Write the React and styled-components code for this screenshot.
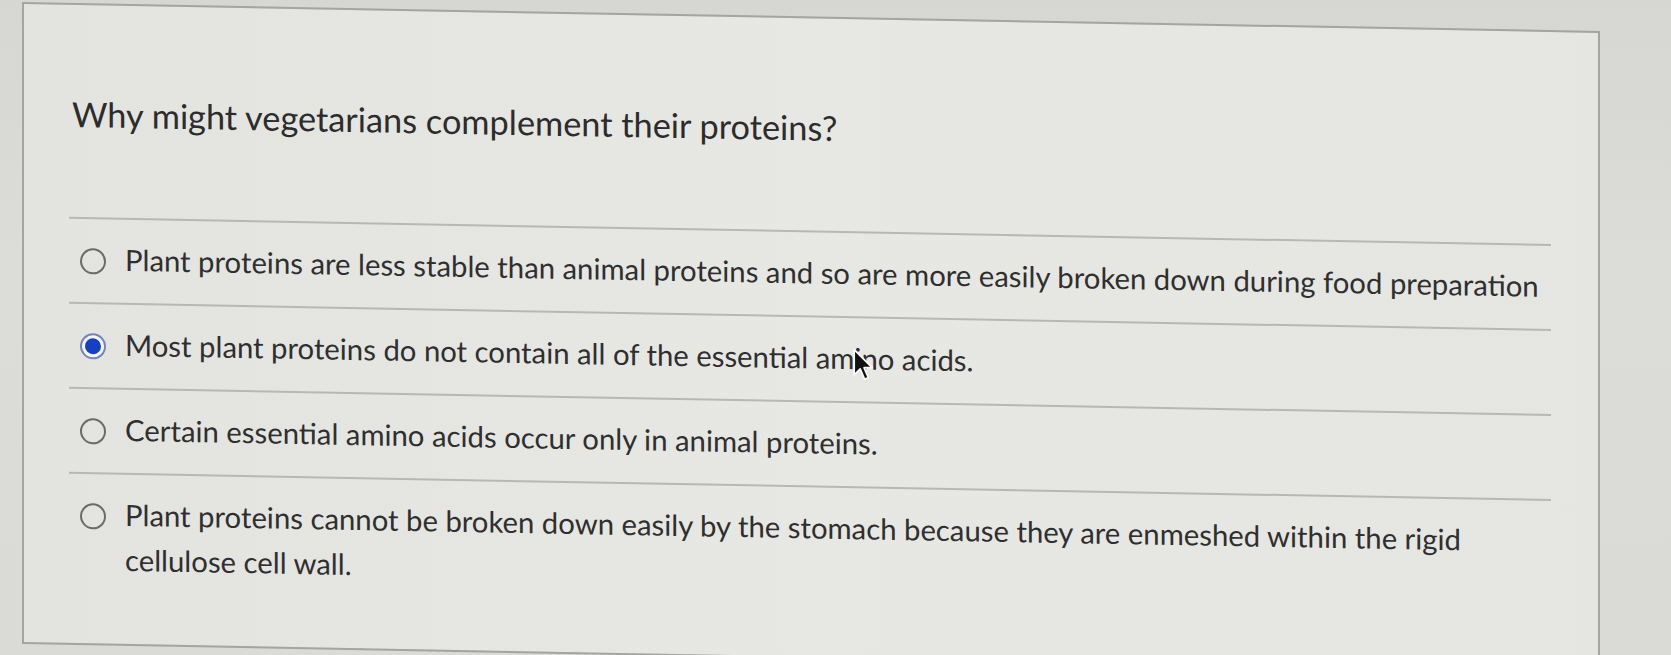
import React from "react";
import styled, { createGlobalStyle } from "styled-components";

const GlobalStyle = createGlobalStyle`
  html, body {
    margin: 0;
    padding: 0;
    background: #dcdcd9;
    overflow: hidden;
  }
  body {
    font-family: Lato, "Open Sans", sans-serif;
  }
`;

const Page = styled.div`
  position: relative;
  width: 1671px;
  height: 655px;
  padding: 2px 0 0 22px;
  box-sizing: border-box;
  overflow: hidden;
  background: linear-gradient(180deg, #d6d6d3 0%, #dcdcd9 40%, #dadad7 100%);
`;

const Card = styled.div`
  width: 1578px;
  height: 642px;
  box-sizing: border-box;
  border: 2px solid #a4a4a2;
  background: linear-gradient(90deg, #e3e3e0 0%, #e7e7e4 50%, #e5e5e2 100%);
  transform: skewY(1.05deg);
  transform-origin: 0 0;
  padding: 89px 0 0 45px;
`;

const Question = styled.h2`
  margin: 0 0 0 3px;
  font-family: Lato, sans-serif;
  font-weight: 400;
  font-size: 34.3px;
  line-height: 40px;
  color: #2c2c2c;
`;

const Options = styled.div`
  margin-top: 83px;
  width: 1482px;
  display: flex;
  flex-direction: column;
`;

const Option = styled.label`
  display: flex;
  align-items: flex-start;
  gap: 19px;
  border-top: 2px solid #b7b7b4;
  padding: 17px 0 ${(p) => (p.$last ? "0" : "21px")} 11px;
`;

const Radio = styled.span`
  flex: none;
  position: relative;
  width: 26px;
  height: 26px;
  margin-top: 12px;
  border-radius: 50%;
  box-sizing: border-box;
  border: 2px solid ${(p) => (p.$checked ? "#7484b8" : "#6b6b6b")};
  background: ${(p) => (p.$checked ? "#f4f5f8" : "transparent")};

  &::after {
    content: "";
    display: ${(p) => (p.$checked ? "block" : "none")};
    position: absolute;
    inset: 3px;
    border-radius: 50%;
    background: #1540c2;
  }
`;

const OptionText = styled.span`
  font-family: Lato, sans-serif;
  font-size: 29.3px;
  line-height: 45px;
  color: #2f2f2f;
`;

const Pointer = styled.svg`
  position: absolute;
  left: 852px;
  top: 347px;
  width: 24px;
  height: 36px;
`;

const options = [
  "Plant proteins are less stable than animal proteins and so are more easily broken down during food preparation",
  "Most plant proteins do not contain all of the essential amino acids.",
  "Certain essential amino acids occur only in animal proteins.",
  "Plant proteins cannot be broken down easily by the stomach because they are enmeshed within the rigid cellulose cell wall.",
];

const App = () => {
  return (
    <>
      <GlobalStyle />
      <Page>
        <Card>
          <Question>Why might vegetarians complement their proteins?</Question>
          <Options>
            {options.map((text, i) => (
              <Option key={i} $last={i === options.length - 1}>
                <Radio $checked={i === 1} />
                <OptionText>{text}</OptionText>
              </Option>
            ))}
          </Options>
        </Card>
        <Pointer viewBox="0 0 22 32">
          <path
            d="M2 2 L2 25 L7.5 19.5 L11.5 29 L15 27.5 L11 18.5 L18.5 18.5 Z"
            fill="#111"
            stroke="#fafafa"
            strokeWidth="1.6"
            strokeLinejoin="round"
          />
        </Pointer>
      </Page>
    </>
  );
};

export default App;
